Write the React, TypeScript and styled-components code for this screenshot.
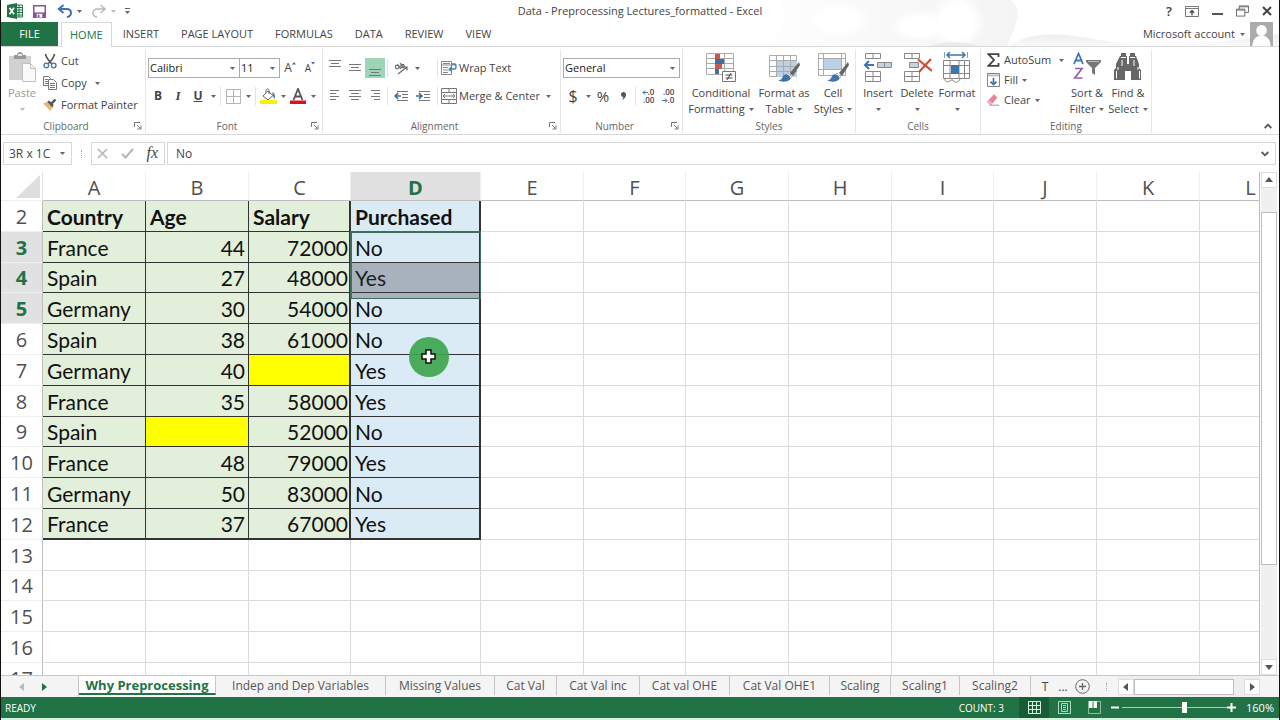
import React, { useEffect, useState } from "react";
import styled, { createGlobalStyle, css } from "styled-components";

const GREEN = "#217346";
const INK = "#444";
const LINE = "#d8d8d8";
const UI_FONT = '"Open Sans", "Noto Sans", sans-serif';
const CELL_FONT = 'Lato, "Open Sans", sans-serif';

const GlobalStyle = createGlobalStyle`
  * { box-sizing: border-box; }
  body { margin: 0; background: #fff; color: ${INK}; font: 12px/16px ${UI_FONT}; }
  button, input, select { font: inherit; color: inherit; margin: 0; }
  button { background: none; border: 0; padding: 0; cursor: pointer; white-space: nowrap; }
  svg { display: block; flex: none; }
`;

const Window = styled.div`
  display: flex;
  flex-direction: column;
  height: 100vh;
  border: solid #111;
  border-width: 0 1px;
  overflow: hidden;
`;

/* ---------- title bar and ribbon tabs ---------- */

const Top = styled.header`
  position: relative;
  flex: none;
  border-bottom: 1px solid ${LINE};
  font-size: 11px;
`;

const Swirl = styled.svg`
  position: absolute;
  right: 0;
  top: 0;
  z-index: -1;
`;

const TitleBar = styled.div`
  display: grid;
  grid-template-columns: 1fr auto 1fr;
  align-items: center;
  height: 22px;
`;

const QuickAccess = styled.div`
  display: flex;
  align-items: center;
  padding-left: 5px;
`;

const QuickButton = styled.button<{ $gap?: number }>`
  margin-right: ${(p) => p.$gap ?? 4}px;
`;

const Title = styled.h1`
  margin: 0;
  font-size: 11px;
  font-weight: 400;
`;

const WindowButtons = styled.div`
  display: flex;
  justify-content: flex-end;
  align-items: center;
  gap: 13px;
  padding-right: 7px;
  font-size: 13px;
  font-weight: 600;
`;

const TabBar = styled.nav`
  display: flex;
  align-items: stretch;
  height: 24px;
`;

const FileTab = styled.button`
  width: 57px;
  margin-right: 3px;
  background: ${GREEN};
  color: #fff;
`;

const RibbonTab = styled.button<{ $active?: boolean }>`
  padding: 0 11px;
  ${(p) =>
    p.$active &&
    css`
      padding: 0 8px;
      color: ${GREEN};
      background: #fff;
      border: 1px solid ${LINE};
      border-bottom: 0;
      margin-bottom: -1px;
    `}
`;

const Account = styled.button`
  display: flex;
  align-items: center;
  gap: 5px;
  margin-left: auto;
  margin-right: 6px;
`;

/* ---------- ribbon ---------- */

const Ribbon = styled.section`
  display: flex;
  flex: none;
  height: 88px;
  border-bottom: 1px solid ${LINE};
  font-size: 11px;
`;

const GroupBox = styled.section<{ $width: number }>`
  flex: 0 0 ${(p) => p.$width}px;
  display: flex;
  flex-direction: column;
  margin: 2px 0 1px;
  border-right: 1px solid #e6e6e6;
`;

const GroupBody = styled.div<{ $padding?: number }>`
  flex: 1;
  display: flex;
  padding: 1px 0 0 ${(p) => p.$padding ?? 0}px;
`;

const GroupFoot = styled.footer`
  display: flex;
  align-items: center;
  height: 14px;
  font-size: 10px;
  line-height: 14px;
  color: #666;
`;

const GroupName = styled.span`
  flex: 1;
  text-align: center;
`;

const LaunchButton = styled.button`
  flex: 0 0 14px;
  padding-left: 3px;
`;

const Stack = styled.div<{ $top?: number; $gap?: number; $width?: number }>`
  display: flex;
  flex-direction: column;
  align-items: flex-start;
  padding-top: ${(p) => p.$top ?? 0}px;
  gap: ${(p) => p.$gap ?? 0}px;
  ${(p) => p.$width && `flex: 0 0 ${p.$width}px;`}
`;

const ToolRow = styled.div`
  display: flex;
  align-items: center;
  height: 20px;
`;

const LabelButton = styled.button<{ $height?: number; $gap?: number }>`
  display: flex;
  align-items: center;
  gap: ${(p) => p.$gap ?? 4}px;
  height: ${(p) => p.$height ?? 22}px;
`;

const CaretSlot = styled.span`
  padding-left: 4px;
`;

const BigButton = styled.button<{ $width: number; $muted?: boolean }>`
  display: flex;
  flex-direction: column;
  align-items: center;
  width: ${(p) => p.$width}px;
  padding-top: 2px;
  color: ${(p) => (p.$muted ? "#999" : INK)};
  svg.art { margin-bottom: 2px; }
`;

const CaretLine = styled.span`
  display: flex;
  align-items: center;
  justify-content: center;
  gap: 4px;
  height: 16px;
`;

const IconButton = styled.button<{ $width?: number; $on?: boolean }>`
  display: flex;
  align-items: center;
  justify-content: center;
  width: ${(p) => p.$width ?? 20}px;
  height: 20px;
  background: ${(p) => (p.$on ? "#9fd5b7" : "none")};
`;

const Glyph = styled.span<{ $size?: number; $bold?: boolean; $italic?: boolean; $underline?: boolean; $serif?: boolean }>`
  font-size: ${(p) => p.$size ?? 13}px;
  font-weight: ${(p) => (p.$bold ? 700 : 400)};
  font-style: ${(p) => (p.$italic ? "italic" : "normal")};
  text-decoration: ${(p) => (p.$underline ? "underline" : "none")};
  font-family: ${(p) => (p.$serif ? '"Liberation Serif", serif' : UI_FONT)};
`;

const Divider = styled.span<{ $space?: number }>`
  width: 1px;
  height: 18px;
  margin: 0 ${(p) => p.$space ?? 2}px;
  background: #e2e2e2;
`;

const Picker = styled.label<{ $width: number }>`
  display: flex;
  align-items: center;
  width: ${(p) => p.$width}px;
  height: 20px;
  padding-right: 4px;
  border: 1px solid #ababab;
  & + & { border-left: 0; }
  select {
    flex: 1;
    min-width: 0;
    padding: 0 1px;
    border: 0;
    background: none;
    appearance: none;
    color: #222;
  }
`;

const Collapse = styled.button`
  margin: auto 7px 5px auto;
`;

/* ---------- formula bar ---------- */

const FormulaBar = styled.section`
  display: flex;
  flex: none;
  align-items: center;
  height: 37px;
  padding: 0 3px 0 2px;
`;

const Box = styled.div<{ $width?: number }>`
  display: flex;
  align-items: center;
  justify-content: space-between;
  height: 23px;
  ${(p) => (p.$width ? `flex: none; width: ${p.$width}px;` : "flex: 1;")}
  padding: 0 6px 0 5px;
  border: 1px solid ${LINE};
  & + & { margin-left: 2px; padding-left: 8px; }
  input {
    flex: 1;
    min-width: 0;
    padding: 0;
    border: 0;
    outline: 0;
    background: none;
  }
`;

const Grip = styled.span`
  align-self: center;
  height: 8px;
  margin: 0 9px;
  border-left: 1px dotted #aaa;
`;

/* ---------- sheet ---------- */

const Workspace = styled.main`
  display: flex;
  flex: 1;
  min-height: 0;
`;

const Viewport = styled.div`
  position: relative;
  flex: 1;
  min-width: 0;
  overflow: hidden;
  border-right: 1px solid #bbb;
`;

const Sheet = styled.table<{ $width: number }>`
  table-layout: fixed;
  width: ${(p) => p.$width}px;
  border-collapse: separate;
  border-spacing: 0;
  th, td { padding: 0; overflow: hidden; white-space: nowrap; }
`;

const Row = styled.tr<{ $height: number }>`
  height: ${(p) => p.$height}px;
`;

const HeadCell = styled.th<{ $on?: boolean; $side?: boolean }>`
  font-size: 20px;
  line-height: 24px;
  font-weight: ${(p) => (p.$on ? 700 : 400)};
  color: ${(p) => (p.$on ? GREEN : "#505050")};
  background: ${(p) => (p.$on ? "#e1e1e1" : "#fff")};
  border-right: 1px solid ${(p) => (p.$side ? "#bdbdbd" : "#efefef")};
  border-bottom: 1px solid ${(p) => (p.$side ? "#eee" : "#bdbdbd")};
  && { padding-top: ${(p) => (p.$side ? 1 : 3)}px; }
`;

const Corner = styled.td`
  border-right: 1px solid #e4e4e4;
  border-bottom: 1px solid #eee;
  svg { margin-left: auto; margin-right: 2px; }
`;

const fills: Record<string, string> = {
  green: "#e2efda",
  blue: "#daebf5",
  yellow: "#ffff00",
  none: "#fff",
};

const Cell = styled.td<{ $fill: string; $bold?: boolean; $right?: boolean; $edge?: boolean; $last?: boolean }>`
  font: ${(p) => (p.$bold ? 700 : 400)} 21px/24px ${CELL_FONT};
  color: #111;
  text-align: ${(p) => (p.$right ? "right" : "left")};
  background: ${(p) => fills[p.$fill]};
  border: solid ${(p) => (p.$fill === "none" ? "#dcdcdc" : "#333")};
  border-width: 0 ${(p) => (p.$edge ? 2 : 1)}px ${(p) => (p.$last ? 2 : 1)}px 0;
  && { padding: 1px ${(p) => (p.$edge ? 1 : 3)}px 0 4px; }
`;

const Selection = styled.div`
  position: absolute;
  left: 349px;
  top: 59px;
  width: 131px;
  height: 68px;
  border: 2px solid #3f6f5b;
  border-right-width: 1px;
  border-bottom-width: 1px;
`;

const SelectionShade = styled.div`
  margin-top: 30px;
  height: 35px;
  background: rgba(60, 60, 70, 0.32);
`;

const Pointer = styled.svg`
  position: absolute;
  left: 407px;
  top: 165px;
`;

const Scroll = styled.div`
  display: flex;
  flex-direction: column;
  flex: none;
  width: 19px;
  padding: 0 2px 0 1px;
`;

const ScrollButton = styled.button`
  display: flex;
  align-items: center;
  justify-content: center;
  flex: none;
  width: 16px;
  height: 16px;
  background: #fff;
  border: 1px solid #ddd;
`;

const Track = styled.div`
  flex: 1;
  width: 16px;
  padding-top: 24px;
  background: #f0f0f0;
`;

const Thumb = styled.div`
  height: 79%;
  background: #fff;
  border: 1px solid #bdbdbd;
`;

/* ---------- sheet tabs ---------- */

const SheetBar = styled.nav`
  display: flex;
  flex: none;
  align-items: stretch;
  height: 22px;
  background: #f4f4f4;
  border-top: 1px solid #c6c6c6;
`;

const SheetNav = styled.div`
  display: flex;
  align-items: center;
  gap: 14px;
  width: 78px;
  padding-left: 17px;
  border-right: 1px solid #c6c6c6;
`;

const SheetTab = styled.button<{ $width: number; $active?: boolean }>`
  flex: none;
  width: ${(p) => p.$width}px;
  height: 19px;
  color: #555;
  border-right: 1px solid #c6c6c6;
  ${(p) =>
    p.$active &&
    css`
      color: ${GREEN};
      font-size: 13px;
      font-weight: 700;
      background: #fff;
      border-bottom: 2px solid ${GREEN};
    `}
`;

const MoreTabs = styled.button<{ $width: number }>`
  display: flex;
  align-items: center;
  justify-content: center;
  width: ${(p) => p.$width}px;
`;

const HScroll = styled.div`
  display: flex;
  align-items: center;
  margin-left: auto;
  width: 142px;
  margin-right: 19px;
  background: #eee;
`;

const HThumb = styled.div`
  width: 100px;
  height: 16px;
  margin-right: auto;
  background: #fff;
  border: 1px solid #bdbdbd;
`;

/* ---------- status bar ---------- */

const StatusBar = styled.footer`
  display: flex;
  flex: none;
  align-items: center;
  height: 23px;
  padding: 0 5px 0 4px;
  color: #fff;
  font-size: 10px;
  background: ${GREEN};
  border-bottom: 2px solid #d4f3e0;
`;

const ViewButton = styled.button<{ $on?: boolean }>`
  display: flex;
  align-items: center;
  justify-content: center;
  width: 30px;
  height: 21px;
  background: ${(p) => (p.$on ? "#185c37" : "none")};
`;

const Count = styled.span`
  margin-left: auto;
  margin-right: 15px;
`;

const Zoom = styled.input`
  width: 105px;
  height: 16px;
  appearance: none;
  background: linear-gradient(#a9d0ba, #a9d0ba) center / 100% 1px no-repeat;
  &::-webkit-slider-thumb {
    appearance: none;
    width: 5px;
    height: 11px;
    background: #fff;
  }
`;

const ZoomSlot = styled.span`
  display: flex;
  padding: 0 2px;
`;

const ZoomLabel = styled.span`
  margin-left: 10px;
  font-size: 11px;
`;

/* ---------- drawings ---------- */

const Caret = ({ color = "#666" }: { color?: string }) => (
  <svg width="5" height="3" viewBox="0 0 5 3"><path d="M0 0h5L2.500 3z" fill={color} /></svg>
);

const Arrow = ({ dir, color = "#555" }: { dir: "up" | "down" | "left" | "right"; color?: string }) => {
  const paths = { up: "M0 6h8L4 1z", down: "M0 2h8L4 7z", left: "M6 0v8L1 4z", right: "M2 0v8l5-4z" };
  return <svg width="8" height="8" viewBox="0 0 8 8"><path d={paths[dir]} fill={color} /></svg>;
};

const SizeMark = ({ down = false }: { down?: boolean }) => (
  <svg width="4" height="12" viewBox="0 0 4 12"><path d={down ? "M0 0h4L2 2.500z" : "M0 2.500h4L2 0z"} fill="#3e6ea3" /></svg>
);

const Launcher = () => (
  <svg width="8" height="8" viewBox="0 0 8 8" fill="none" stroke="#777">
    <path d="M.5 5V.5H6M3 3l3.500 3.500M7 3.500V7H3.500" />
  </svg>
);

const ExcelLogo = () => (
  <svg width="18" height="16" viewBox="0 0 18 16">
    <path d="M9 2h7.500v12H9z" fill="#fff" stroke={GREEN} />
    <path d="M10 4.500h6M10 7h6M10 9.500h6M10 12h6M13 2v12" stroke={GREEN} />
    <path d="M1 2l10-2v16L1 14z" fill={GREEN} />
    <path d="M3.500 4.800l4.500 6.400M8 4.800l-4.500 6.400" stroke="#fff" strokeWidth="1.700" />
  </svg>
);

const SaveIcon = () => (
  <svg width="13" height="13" viewBox="0 0 14 14">
    <path d="M.8.800h12.400v12.400H.8z" fill="#fff" stroke="#8450a0" strokeWidth="1.600" />
    <path d="M1 8h12v5H1z" fill="#8450a0" />
    <path d="M4 9.500h6v4H4z" fill="#fff" /><path d="M5 10.500h2v3H5z" fill="#8450a0" />
  </svg>
);

const UndoIcon = ({ redo = false }: { redo?: boolean }) => (
  <svg width="16" height="14" viewBox="0 0 16 14" fill="none" stroke={redo ? "#b9b9b9" : "#3d72ad"} strokeWidth={redo ? 1.5 : 2}>
    <g transform={redo ? "matrix(-1 0 0 1 16 0)" : undefined}>
      <path d="M6.500 1L1.800 5l4.700 4M2 5h7.500c3 0 4.500 1.700 4.500 4 0 2-1.500 3.500-4 4.300" />
    </g>
  </svg>
);

const CustomizeIcon = () => (
  <svg width="5" height="6" viewBox="0 0 5 6"><path d="M0 0h5v1H0zM0 3h5L2.500 6z" fill="#666" /></svg>
);

const RibbonToggle = () => (
  <svg width="14" height="11" viewBox="0 0 14 11" fill="none" stroke="#777">
    <path d="M.5.500h13v10H.5zM1 2.500h12" /><path d="M7 9.500V5M4.800 6.800L7 4.600l2.200 2.200" stroke="#444" strokeWidth="1.300" />
  </svg>
);

const MinimizeIcon = () => (
  <svg width="11" height="10" viewBox="0 0 11 10"><path d="M0 8h11" stroke="#555" strokeWidth="2" /></svg>
);

const RestoreIcon = () => (
  <svg width="13" height="12" viewBox="0 0 14 12" fill="#fff" stroke="#666">
    <path d="M3.500.500h10v7h-10z" /><path d="M3.500 1.500h10" /><path d="M.5 4h9v7.500h-9z" /><path d="M.5 5h9" />
  </svg>
);

const CloseIcon = () => (
  <svg width="10" height="10" viewBox="0 0 10 10"><path d="M1 1l8 8M9 1L1 9" stroke="#444" strokeWidth="2" /></svg>
);

const Avatar = () => (
  <svg width="23" height="24" viewBox="0 0 24 24" preserveAspectRatio="none">
    <path d="M0 0h24v24H0z" fill="#ababab" /><circle cx="12" cy="8.500" r="5.500" fill="#fff" />
    <path d="M2.500 24c0-6 3.500-9.500 7-10h5c3.500.5 7 4 7 10z" fill="#fff" />
  </svg>
);

const PasteIcon = () => (
  <svg className="art" width="28" height="31" viewBox="0 0 28 31">
    <path d="M1 4h22v24H1z" fill="#d3d0d4" />
    <path d="M6 7V3h3c0-4 6-4 6 0h3v4z" fill="#999" /><path d="M10 3h4" stroke="#fff" strokeWidth="1.500" />
    <path d="M14.500 11.500h8l5 5v13h-13z" fill="#fafafa" stroke="#c0c0c0" /><path d="M22.500 11.500v5h5" fill="none" stroke="#c0c0c0" />
  </svg>
);

const CutIcon = () => (
  <svg width="14" height="15" viewBox="0 0 14 15" fill="none">
    <path d="M2.500 0c.3 3 2.500 6 6.500 10M11.500 0c-.3 3-2.500 6-6.500 10" stroke="#555" strokeWidth="1.700" />
    <circle cx="3.300" cy="11.500" r="2.300" stroke="#4a7396" strokeWidth="1.300" /><circle cx="10.700" cy="11.500" r="2.300" stroke="#4a7396" strokeWidth="1.300" />
  </svg>
);

const CopyIcon = () => (
  <svg width="14" height="14" viewBox="0 0 14 14" fill="#fff" stroke="#777">
    <path d="M.5.500h5l2 2v7h-7z" /><path d="M2 3.500h3M2 5.500h3M2 7.500h3" />
    <path d="M5.500 3.500h5l3 3v7h-8z" /><path d="M7 7.500h5M7 9.500h5M7 11.500h5" />
  </svg>
);

const PainterIcon = () => (
  <svg width="14" height="12" viewBox="0 0 15 13">
    <path d="M0 5l5-2 6 5-3 5z" fill="#eab676" /><path d="M4.500 3l2-1.500 5 5L10 9z" fill="#555" />
    <path d="M9 5l4.500-4.500" stroke="#555" strokeWidth="2.600" />
  </svg>
);

const BordersIcon = () => (
  <svg width="15" height="15" viewBox="0 0 15 15" fill="none" stroke="#b4b4b4"><path d="M.5.500h14v14H.5zM7.500 0v15M0 7.500h15" /></svg>
);

const FillIcon = () => (
  <svg width="17" height="16" viewBox="0 0 17 16">
    <path d="M3 8l5-5 5 4.500-5 4.500z" fill="#fff" stroke="#666" /><path d="M6 5V2.500C6 .5 9 .5 9 2.500V6" fill="none" stroke="#666" />
    <path d="M12 4c3 1 3.500 4 2.500 7-1-1-1.500-2.500-1.500-4z" fill="#4b7a9e" /><path d="M0 12h17v4H0z" fill="#f6f012" />
  </svg>
);

const FontColorIcon = () => (
  <svg width="16" height="16" viewBox="0 0 16 16">
    <path d="M3.500 12L8 1l4.500 11M5 8.500h6" fill="none" stroke="#555" strokeWidth="1.800" /><path d="M0 12.500h16V16H0z" fill="#d9141b" />
  </svg>
);

const CommaIcon = () => (
  <svg width="5" height="8" viewBox="0 0 5 8"><path d="M2.500 0C4 0 5 1 5 2.500 5 5 3.500 7 1 8c.8-1 1.300-2 1.300-3C1 5 0 4 0 2.500S1 0 2.500 0z" fill="#555" /></svg>
);

const LinesIcon = ({ rows, top = 0, height = 12 }: { rows: [number, number][]; top?: number; height?: number }) => (
  <svg width="12" height={height} viewBox={`0 0 12 ${height}`}>
    {rows.map(([a, b], i) => <path key={i} d={`M${a} ${top + i * 3 + 0.5}H${b}`} stroke="#777" />)}
  </svg>
);

const OrientIcon = () => (
  <svg width="15" height="13" viewBox="0 0 15 13" fill="none" stroke="#666" strokeWidth="1.200">
    <circle cx="3.200" cy="5" r="1.800" /><path d="M3.500 2.500L7 7M6 1l4 5" /><circle cx="8.500" cy="4" r="1.700" />
    <path d="M4 12l9-7M9.500 5H13v3.500" />
  </svg>
);

const IndentIcon = ({ out = false }: { out?: boolean }) => (
  <svg width="15" height="12" viewBox="0 0 15 12" fill="none">
    <path d="M3 1.500h11M8 4.500h6M8 7.500h6M3 10.500h11" stroke="#777" />
    <path d={out ? "M7 6H1.500M4 3.200L1.200 6 4 8.800" : "M0 6h5.500M3 3.200L5.800 6 3 8.800"} stroke="#3d6f9e" strokeWidth="1.700" />
  </svg>
);

const WrapIcon = () => (
  <svg width="16" height="16" viewBox="0 0 16 16" fill="none">
    <path d="M.5 1.500h10v13H.5zM0 5h14" stroke="#888" /><path d="M2 3.500h7M2 7.500h5M2 10h7M2 12.500h5" stroke="#888" />
    <path d="M10 4h3.500c2 0 2 5 0 5H8.500M11 6.500L8.500 9l2.500 2.500" stroke="#4a7fb0" strokeWidth="1.400" />
  </svg>
);

const MergeIcon = () => (
  <svg width="16" height="16" viewBox="0 0 16 16" fill="none" stroke="#777">
    <path d="M.5.500h15v15H.5zM.5 4.500h15M.5 11.500h15M8 0v4.500M8 11.500V16" />
    <path d="M2 8h12M4 6L2 8l2 2M12 6l2 2-2 2" />
  </svg>
);

const DecimalArt = styled.span`
  display: flex;
  flex-direction: column;
  font-size: 8px;
  font-weight: 600;
  line-height: 8px;
`;

const DecimalLine = styled.span`
  display: flex;
  align-items: center;
  justify-content: flex-end;
`;

const DecimalArrow = ({ right = false }: { right?: boolean }) => (
  <svg width="6" height="5" viewBox="0 0 6 5" fill="none" stroke="#3d6f9e">
    <path d={right ? "M0 2.500h5M3 .5l2 2-2 2" : "M1 2.500h5M3 .5l-2 2 2 2"} />
  </svg>
);

const ConditionalIcon = () => (
  <svg className="art" width="30" height="31" viewBox="0 0 30 31">
    <path d="M.5 1.500h27v21H.5z" fill="#fff" stroke="#aaa" /><path d="M0 6.500h27M0 11.500h27M0 16.500h27M9.500 1v21M18.500 1v21" stroke="#aaa" />
    <path d="M9 2h5v5H9z" fill="#c75b45" /><path d="M9 7h9v5H9z" fill="#3e6ea3" /><path d="M9 12h7v5H9z" fill="#c75b45" /><path d="M9 17h4v5H9z" fill="#3e6ea3" />
    <path d="M16.500 19.500h13v10h-13z" fill="#fff" stroke="#777" /><path d="M19.500 23h7M19.500 26h7M25 21l-4 7" stroke="#444" />
  </svg>
);

const Brush = () => (
  <>
    <path d="M31 10l-9 11 3 3 7-11z" fill="#666" /><path d="M20 21l4 4-3 3-4-3z" fill="#fff" stroke="#999" strokeWidth=".6" />
    <path d="M19 22.500c2 .5 3.500 2 3.500 4-2 3.500-8 4-12.500 2 3-.5 4-1.500 4.500-3.500 1-2 2.500-3 4.500-2.500z" fill="#3e74a8" />
  </>
);

const FormatTableIcon = () => (
  <svg className="art" width="32" height="31" viewBox="0 0 32 31">
    <path d="M1.500 3.500h27v21h-27z" fill="#fff" stroke="#aaa" /><path d="M8 9h21v16H8z" fill="#bcd0e6" />
    <path d="M1 8.500h28M1 14.500h28M1 19.500h28M8.500 3v22M15.500 3v22M22.500 3v22" stroke="#aaa" /><Brush />
  </svg>
);

const CellStylesIcon = () => (
  <svg className="art" width="32" height="31" viewBox="0 0 32 31">
    <path d="M1.500 1.500h27v22h-27z" fill="#fff" stroke="#aaa" /><path d="M1 6.500h28M1 17.500h28M6.500 1v23M24.500 1v23" stroke="#aaa" />
    <path d="M7 7h17v10H7z" fill="#bcd0e6" /><Brush />
  </svg>
);

const InsertIcon = () => (
  <svg className="art" width="30" height="31" viewBox="0 0 30 31" fill="#fff" stroke="#888">
    <path d="M2.500 1.500h15v5h-15zM10 1v6M2.500 19.500h15v10h-15zM2.500 24.500h15M10 19v11" />
    <path d="M14.500 10.500h14v5h-14z" fill="#c5d3e0" /><path d="M21.500 10v6" /><path d="M11 13H2M6 9l-4 4 4 4" fill="none" stroke="#3e74a8" strokeWidth="2" />
  </svg>
);

const DeleteIcon = () => (
  <svg className="art" width="30" height="31" viewBox="0 0 30 31" fill="#fff" stroke="#888">
    <path d="M2.500 1.500h15v5h-15zM10 1v6M2.500 19.500h15v10h-15zM2.500 24.500h15M10 19v11" />
    <path d="M7.500 10.500h9v5h-9z" fill="#c5d3e0" /><path d="M16 7.500l14 11.500M29 7L17 20" fill="none" stroke="#cf4f37" strokeWidth="2.200" />
  </svg>
);

const FormatIcon = () => (
  <svg className="art" width="30" height="31" viewBox="0 0 30 31" fill="none" stroke="#888">
    <path d="M2.500 0v6M25.500 0v6" stroke="#7fa0c4" /><path d="M5 3h18M8 0L5 3l3 3M20 0l3 3-3 3" stroke="#3e74a8" strokeWidth="1.500" />
    <path d="M1.500 8.500h26v18h-26zM8 8v19M17 8v19M22.500 8v19M1 13.500h27M1 21.500h27" /><path d="M9 13h8v9H9z" fill="#3e74a8" stroke="none" />
    <path d="M3 27c0 4 4 3 6 1h2c2 4 6 2 7-1" fill="#fff" />
  </svg>
);

const SumIcon = () => (
  <svg width="13" height="14" viewBox="0 0 13 14"><path d="M11.500 4V1.200H1.500L7 7l-5.500 5.800h10V10" fill="none" stroke="#444" strokeWidth="1.800" /></svg>
);

const FillDownIcon = () => (
  <svg width="13" height="14" viewBox="0 0 14 15" fill="none">
    <path d="M.5.500h13v14H.5z" stroke="#777" /><path d="M1 2.500h12" stroke="#bbb" strokeWidth="2" />
    <path d="M7 5v7.500M3.800 9.300L7 12.500l3.200-3.200" stroke="#3e74a8" strokeWidth="1.800" />
  </svg>
);

const ClearIcon = () => (
  <svg width="13" height="12" viewBox="0 0 15 13">
    <path d="M0 8.500L8 0l4 3.500-7.500 9H3z" fill="#e5879b" /><path d="M0 8.500l2-2 4.500 4-2 2H3z" fill="#f2b5c1" /><path d="M3 12.500h11" stroke="#888" />
  </svg>
);

const SortIcon = () => (
  <svg className="art" width="30" height="31" viewBox="0 0 30 31" fill="none">
    <path d="M2 12L6.500 1.500 11 12M3.500 8.500h6" stroke="#3e7ab5" strokeWidth="1.800" />
    <path d="M3 16.500h7L2.800 26h7.700" stroke="#9060b0" strokeWidth="1.700" />
    <path d="M14 8h15v2l-6 6v7l-3-2v-5l-6-6z" fill="#777" /><path d="M16 9.500h11" stroke="#bbb" />
  </svg>
);

const FindIcon = () => (
  <svg className="art" width="30" height="31" viewBox="0 0 30 31" fill="#666">
    <path d="M8 1h5v3h1v8h2V4h1V1h5v3h1l3 8v4l2 2v10H18v-9h-6v9H1V18l2-2v-4l4-8h1z" />
    <path d="M5 15v3M9 8v6M21 8v6M25 15v3M3.500 19v7.500M26.500 19v7.500M8 5.500h5M17 5.500h5" stroke="#fff" />
  </svg>
);

const Chevron = ({ up = false }: { up?: boolean }) => (
  <svg width="8" height="6" viewBox="0 0 8 6" fill="none"><path d={up ? "M.7 5L4 1.700 7.300 5" : "M.7 1L4 4.300 7.300 1"} stroke="#555" strokeWidth="1.800" /></svg>
);

const CancelEntry = () => (
  <svg width="11" height="11" viewBox="0 0 11 11"><path d="M1 1l9 9M10 1l-9 9" stroke="#b5b5b5" strokeWidth="1.600" /></svg>
);

const AcceptEntry = () => (
  <svg width="13" height="11" viewBox="0 0 13 11"><path d="M1 6l3.500 3.500L12 1" fill="none" stroke="#b5b5b5" strokeWidth="2" /></svg>
);

const PlusCircle = () => (
  <svg width="15" height="15" viewBox="0 0 15 15" fill="none" stroke="#666"><circle cx="7.500" cy="7.500" r="6.800" /><path d="M7.500 4v7M4 7.500h7" strokeWidth="1.300" /></svg>
);

const GridView = () => (
  <svg width="13" height="13" viewBox="0 0 13 13" fill="none" stroke="#d8eee0"><path d="M.5.500h12v12H.5zM4.500 0v13M8.500 0v13M0 4.500h13M0 8.500h13" /></svg>
);

const PageView = () => (
  <svg width="13" height="13" viewBox="0 0 13 13" fill="none" stroke="#b5d8c4"><path d="M.5.500h12v12H.5zM3.500 2.500h6v8h-6zM5 4.500h3M5 6.500h3M5 8.500h3" /></svg>
);

const BreakView = () => (
  <svg width="13" height="13" viewBox="0 0 13 13"><path d="M.5.500h12v12H.5z" fill="none" stroke="#8fc0a4" /><path d="M1 0h3.500v7H1zM5.500 0H9v7H5.500z" fill="#fff" /></svg>
);

const ZoomStep = ({ plus = false }: { plus?: boolean }) => (
  <svg width="9" height="9" viewBox="0 0 9 9" stroke="#fff" strokeWidth="2"><path d={plus ? "M0 4.500h9M4.500 0v9" : "M0 4.500h8"} /></svg>
);

const HeaderSwirl = () => (
  <Swirl width="560" height="46" viewBox="0 0 560 46" aria-hidden="true">
    <defs>
      <linearGradient id="haze" x1="0" x2="1"><stop offset="0" stopColor="#fff" /><stop offset=".4" stopColor="#f9f9f9" /><stop offset="1" stopColor="#f4f4f4" /></linearGradient>
      <linearGradient id="hill" x1="0" y1="0" x2="0" y2="1"><stop offset="0" stopColor="#ededed" /><stop offset="1" stopColor="#fafafa" /></linearGradient>
      <radialGradient id="lobe"><stop offset=".6" stopColor="#fff" /><stop offset="1" stopColor="#fff" stopOpacity="0" /></radialGradient>
    </defs>
    <path d="M60 0H292c14 12 2 30-4 46H40C60 34 70 20 60 0z" fill="url(#haze)" />
    <ellipse cx="120" cy="20" rx="32" ry="18" fill="url(#lobe)" />
    <ellipse cx="200" cy="26" rx="28" ry="16" fill="url(#lobe)" />
    <ellipse cx="238" cy="22" rx="28" ry="28" fill="url(#lobe)" />
    <path d="M210 46c10-5 40-5 50 0z" fill="#ebebeb" />
    <path d="M290 46c20-14 50-14 90-6 60 10 110 4 180-6v12z" fill="url(#hill)" />
  </Swirl>
);

/* ---------- data ---------- */

const ribbonTabs = ["HOME", "INSERT", "PAGE LAYOUT", "FORMULAS", "DATA", "REVIEW", "VIEW"];

const SIDE_WIDTH = 42;
const HEAD_HEIGHT = 29;

const records: string[][] = [
  ["Country", "Age", "Salary", "Purchased"],
  ["France", "44", "72000", "No"],
  ["Spain", "27", "48000", "Yes"],
  ["Germany", "30", "54000", "No"],
  ["Spain", "38", "61000", "No"],
  ["Germany", "40", "", "Yes"],
  ["France", "35", "58000", "Yes"],
  ["Spain", "", "52000", "No"],
  ["France", "48", "79000", "Yes"],
  ["Germany", "50", "83000", "No"],
  ["France", "37", "67000", "Yes"],
];

const sheets: [string, number][] = [
  ["Why Preprocessing", 137], ["Indep and Dep Variables", 170], ["Missing Values", 109], ["Cat Val", 62],
  ["Cat Val inc", 83], ["Cat val OHE", 90], ["Cat Val OHE1", 100], ["Scaling", 61], ["Scaling1", 69], ["Scaling2", 71],
];

const columnWidth = (c: number) => (c === 3 ? 130 : c % 3 === 2 ? 102 : 103);
const rowHeight = (r: number) => (r % 5 === 2 ? 30 : 31);

/* How many tracks, of the given sizes, are needed to cover a length. */
const cover = (length: number, size: (i: number) => number) => {
  const sizes: number[] = [];
  let sum = 0;
  while (sum < length) {
    const next = size(sizes.length);
    sizes.push(next);
    sum += next;
  }
  return sizes;
};

const useWindowSize = () => {
  const read = () => ({ width: window.innerWidth, height: window.innerHeight });
  const [size, setSize] = useState(read);
  useEffect(() => {
    const update = () => setSize(read());
    window.addEventListener("resize", update);
    return () => window.removeEventListener("resize", update);
  }, []);
  return size;
};

/* ---------- parts ---------- */

type GroupProps = { name: string; width: number; padding?: number; launcher?: boolean; children: React.ReactNode };

const Group = ({ name, width, padding, launcher, children }: GroupProps) => (
  <GroupBox $width={width} aria-label={name}>
    <GroupBody $padding={padding}>{children}</GroupBody>
    <GroupFoot>
      <GroupName>{name}</GroupName>
      {launcher && <LaunchButton aria-label={`${name} settings`}><Launcher /></LaunchButton>}
    </GroupFoot>
  </GroupBox>
);

type BigProps = { icon: React.ReactNode; first: string; second?: string; width: number; muted?: boolean };

const Big = ({ icon, first, second, width, muted }: BigProps) => (
  <BigButton $width={width} $muted={muted}>
    {icon}
    <span>{first}</span>
    <CaretLine>{second && <span>{second}</span>}<Caret color={muted ? "#bbb" : undefined} /></CaretLine>
  </BigButton>
);

const Tool = ({ label, width, on, children }: { label: string; width?: number; on?: boolean; children: React.ReactNode }) => (
  <IconButton aria-label={label} $width={width} $on={on}>{children}</IconButton>
);

const Choice = ({ label, value, width }: { label: string; value: string; width: number }) => (
  <Picker $width={width}>
    <select aria-label={label} defaultValue={value}><option>{value}</option></select>
    <Caret />
  </Picker>
);

const SheetGrid = () => {
  const { width, height } = useWindowSize();
  const columns = cover(width - SIDE_WIDTH - 22, columnWidth);
  const rows = cover(height - 217 - HEAD_HEIGHT, rowHeight);
  const total = columns.reduce((a, b) => a + b, SIDE_WIDTH);
  return (
    <Sheet $width={total}>
      <colgroup>
        <col width={SIDE_WIDTH} />
        {columns.map((w, c) => <col key={c} width={w} />)}
      </colgroup>
      <thead>
        <Row $height={HEAD_HEIGHT}>
          <Corner><svg width="24" height="23" viewBox="0 0 24 23"><path d="M24 0v23H0z" fill="#dedede" /></svg></Corner>
          {columns.map((_, c) => (
            <HeadCell key={c} scope="col" $on={c === 3}>{String.fromCharCode(65 + (c % 26))}</HeadCell>
          ))}
        </Row>
      </thead>
      <tbody>
        {rows.map((h, r) => (
          <Row key={r} $height={h}>
            <HeadCell scope="row" $side $on={r >= 1 && r <= 3}>{r + 2}</HeadCell>
            {columns.map((_, c) => {
              const value = records[r]?.[c];
              const fill = value === undefined ? "none" : value === "" ? "yellow" : c === 3 ? "blue" : "green";
              return (
                <Cell
                  key={c}
                  $fill={fill}
                  $bold={r === 0}
                  $right={r > 0 && (c === 1 || c === 2)}
                  $edge={fill !== "none" && c >= 2}
                  $last={r === records.length - 1 && fill !== "none"}
                >
                  {value}
                </Cell>
              );
            })}
          </Row>
        ))}
      </tbody>
    </Sheet>
  );
};

export default function App() {
  return (
    <Window>
      <GlobalStyle />
      <Top>
        <HeaderSwirl />
        <TitleBar>
          <QuickAccess>
            <QuickButton $gap={9} aria-label="Excel"><ExcelLogo /></QuickButton>
            <QuickButton $gap={11} aria-label="Save"><SaveIcon /></QuickButton>
            <QuickButton aria-label="Undo"><UndoIcon /></QuickButton>
            <QuickButton $gap={9} aria-label="Undo history"><Caret /></QuickButton>
            <QuickButton aria-label="Redo"><UndoIcon redo /></QuickButton>
            <QuickButton $gap={9} aria-label="Redo history"><Caret color="#bbb" /></QuickButton>
            <QuickButton aria-label="Customize toolbar"><CustomizeIcon /></QuickButton>
          </QuickAccess>
          <Title>Data - Preprocessing Lectures_formatted - Excel</Title>
          <WindowButtons>
            <button aria-label="Help">?</button>
            <button aria-label="Ribbon display"><RibbonToggle /></button>
            <button aria-label="Minimize"><MinimizeIcon /></button>
            <button aria-label="Restore"><RestoreIcon /></button>
            <button aria-label="Close"><CloseIcon /></button>
          </WindowButtons>
        </TitleBar>
        <TabBar>
          <FileTab>FILE</FileTab>
          {ribbonTabs.map((t) => <RibbonTab key={t} $active={t === "HOME"}>{t}</RibbonTab>)}
          <Account>Microsoft account <Caret /><Avatar /></Account>
        </TabBar>
      </Top>

      <Ribbon>
        <Group name="Clipboard" width={145} launcher>
          <Big icon={<PasteIcon />} first="Paste" width={42} muted />
          <Stack>
            <LabelButton><CutIcon />Cut</LabelButton>
            <LabelButton><CopyIcon />Copy<CaretSlot><Caret /></CaretSlot></LabelButton>
            <LabelButton><PainterIcon />Format Painter</LabelButton>
          </Stack>
        </Group>
        <Group name="Font" width={177} padding={2} launcher>
          <Stack $top={8} $gap={8}>
            <ToolRow>
              <Choice label="Font" value="Calibri" width={92} />
              <Choice label="Font size" value="11" width={40} />
              <Tool label="Grow font"><Glyph $size={12}>A</Glyph><SizeMark /></Tool>
              <Tool label="Shrink font"><Glyph $size={10}>A</Glyph><SizeMark down /></Tool>
            </ToolRow>
            <ToolRow>
              <Tool label="Bold"><Glyph $bold $size={12}>B</Glyph></Tool>
              <Tool label="Italic"><Glyph $bold $italic $serif $size={13}>I</Glyph></Tool>
              <Tool label="Underline"><Glyph $bold $underline $size={12}>U</Glyph></Tool>
              <Tool label="Underline style" width={10}><Caret /></Tool>
              <Divider />
              <Tool label="Borders"><BordersIcon /></Tool>
              <Tool label="Border style" width={10}><Caret /></Tool>
              <Divider />
              <Tool label="Fill color"><FillIcon /></Tool>
              <Tool label="Fill color choices" width={10}><Caret /></Tool>
              <Tool label="Font color"><FontColorIcon /></Tool>
              <Tool label="Font color choices" width={10}><Caret /></Tool>
            </ToolRow>
          </Stack>
        </Group>
        <Group name="Alignment" width={238} padding={2} launcher>
          <Stack $top={8} $gap={8}>
            <ToolRow>
              <Tool label="Top align"><LinesIcon height={18} top={1} rows={[[0, 12], [2, 10], [0, 12]]} /></Tool>
              <Tool label="Middle align"><LinesIcon height={18} top={5} rows={[[0, 12], [2, 10], [0, 12]]} /></Tool>
              <Tool label="Bottom align" on><LinesIcon height={18} top={10} rows={[[0, 12], [2, 10], [0, 12]]} /></Tool>
              <Divider />
              <Tool label="Orientation" width={22}><OrientIcon /></Tool>
              <Tool label="Orientation choices" width={10}><Caret /></Tool>
            </ToolRow>
            <ToolRow>
              <Tool label="Align left"><LinesIcon rows={[[1, 10], [1, 7], [1, 10], [1, 7]]} /></Tool>
              <Tool label="Center"><LinesIcon rows={[[0, 12], [2, 10], [0, 12], [2, 10]]} /></Tool>
              <Tool label="Align right"><LinesIcon rows={[[2, 11], [5, 11], [2, 11], [5, 11]]} /></Tool>
              <Divider />
              <Tool label="Decrease indent" width={22}><IndentIcon out /></Tool>
              <Tool label="Increase indent" width={22}><IndentIcon /></Tool>
            </ToolRow>
          </Stack>
          <Stack $top={8} $gap={8}>
            <ToolRow><Divider $space={3} /><LabelButton $gap={2}><WrapIcon />Wrap Text</LabelButton></ToolRow>
            <ToolRow>
              <Divider $space={3} />
              <LabelButton $gap={2}><MergeIcon />Merge &amp; Center<CaretSlot><Caret /></CaretSlot></LabelButton>
            </ToolRow>
          </Stack>
        </Group>
        <Group name="Number" width={122} padding={2} launcher>
          <Stack $top={8} $gap={8}>
            <ToolRow><Choice label="Number format" value="General" width={117} /></ToolRow>
            <ToolRow>
              <Tool label="Currency"><Glyph $size={16}>$</Glyph></Tool>
              <Tool label="Currency choices" width={10}><Caret /></Tool>
              <Tool label="Percent"><Glyph $size={15}>%</Glyph></Tool>
              <Tool label="Comma style"><CommaIcon /></Tool>
              <Divider />
              <Tool label="Increase decimal">
                <DecimalArt><DecimalLine><DecimalArrow />.0</DecimalLine><DecimalLine>.00</DecimalLine></DecimalArt>
              </Tool>
              <Tool label="Decrease decimal">
                <DecimalArt><DecimalLine>.00</DecimalLine><DecimalLine><DecimalArrow right />.0</DecimalLine></DecimalArt>
              </Tool>
            </ToolRow>
          </Stack>
        </Group>
        <Group name="Styles" width={173} padding={3}>
          <Big icon={<ConditionalIcon />} first="Conditional" second="Formatting" width={70} />
          <Big icon={<FormatTableIcon />} first="Format as" second="Table" width={56} />
          <Big icon={<CellStylesIcon />} first="Cell" second="Styles" width={42} />
        </Group>
        <Group name="Cells" width={125} padding={3}>
          <Big icon={<InsertIcon />} first="Insert" width={38} />
          <Big icon={<DeleteIcon />} first="Delete" width={40} />
          <Big icon={<FormatIcon />} first="Format" width={40} />
        </Group>
        <Group name="Editing" width={171} padding={6}>
          <Stack $width={80}>
            <LabelButton $height={20}><SumIcon />AutoSum<CaretSlot><Caret /></CaretSlot></LabelButton>
            <LabelButton $height={20}><FillDownIcon />Fill<Caret /></LabelButton>
            <LabelButton $height={20}><ClearIcon />Clear<Caret /></LabelButton>
          </Stack>
          <Big icon={<SortIcon />} first="Sort &" second="Filter" width={40} />
          <Big icon={<FindIcon />} first="Find &" second="Select" width={42} />
        </Group>
        <Collapse aria-label="Collapse ribbon"><Chevron up /></Collapse>
      </Ribbon>

      <FormulaBar>
        <Box $width={69}><input aria-label="Name box" defaultValue="3R x 1C" /><Caret /></Box>
        <Grip />
        <Box $width={74}>
          <button aria-label="Cancel"><CancelEntry /></button>
          <button aria-label="Enter"><AcceptEntry /></button>
          <button aria-label="Insert function"><Glyph $serif $italic $size={16}>fx</Glyph></button>
        </Box>
        <Box><input aria-label="Formula" defaultValue="No" /><button aria-label="Expand formula bar"><Chevron /></button></Box>
      </FormulaBar>

      <Workspace>
        <Viewport>
          <SheetGrid />
          <Selection><SelectionShade /></Selection>
          <Pointer width="42" height="42" viewBox="0 0 42 42">
            <circle cx="21" cy="20" r="20" fill="#3fa650" fillOpacity=".93" />
            <path d="M18 13h5v4h4v5h-4v4h-5v-4h-4v-5h4z" fill="#fff" stroke="#111" strokeWidth="1.500" />
          </Pointer>
        </Viewport>
        <Scroll>
          <ScrollButton aria-label="Scroll up"><Arrow dir="up" /></ScrollButton>
          <Track><Thumb /></Track>
          <ScrollButton aria-label="Scroll down"><Arrow dir="down" /></ScrollButton>
        </Scroll>
      </Workspace>

      <SheetBar>
        <SheetNav>
          <button aria-label="Previous sheets"><Arrow dir="left" color="#bbb" /></button>
          <button aria-label="Next sheets"><Arrow dir="right" color={GREEN} /></button>
        </SheetNav>
        {sheets.map(([name, w], i) => <SheetTab key={name} $width={w} $active={i === 0}>{name}</SheetTab>)}
        <MoreTabs $width={28}>T</MoreTabs>
        <MoreTabs $width={8} aria-label="More sheets">...</MoreTabs>
        <MoreTabs $width={30} aria-label="New sheet"><PlusCircle /></MoreTabs>
        <Grip />
        <HScroll>
          <ScrollButton aria-label="Scroll left"><Arrow dir="left" /></ScrollButton>
          <HThumb />
          <ScrollButton aria-label="Scroll right"><Arrow dir="right" /></ScrollButton>
        </HScroll>
      </SheetBar>

      <StatusBar>
        <span>READY</span>
        <Count>COUNT: 3</Count>
        <ViewButton $on aria-label="Normal view"><GridView /></ViewButton>
        <ViewButton aria-label="Page layout view"><PageView /></ViewButton>
        <ViewButton aria-label="Page break view"><BreakView /></ViewButton>
        <ZoomSlot><button aria-label="Zoom out"><ZoomStep /></button></ZoomSlot>
        <Zoom type="range" aria-label="Zoom" min={10} max={260} defaultValue={160} />
        <button aria-label="Zoom in"><ZoomStep plus /></button>
        <ZoomLabel>160%</ZoomLabel>
      </StatusBar>
    </Window>
  );
}
